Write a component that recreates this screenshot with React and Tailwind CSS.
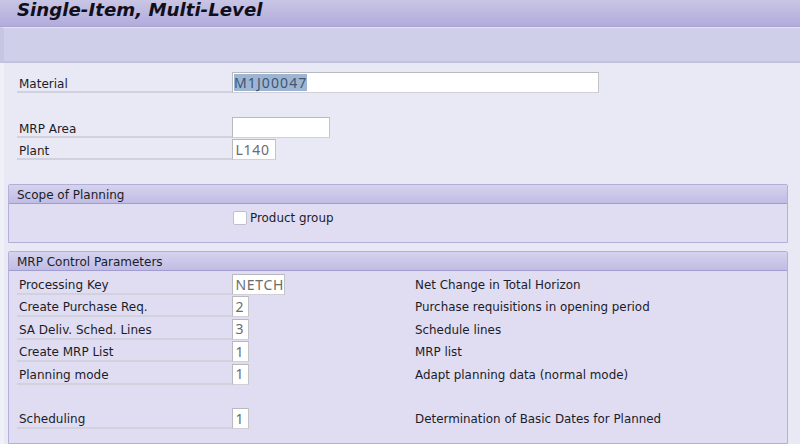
function Field({ w, value, selected }) {
  return (
    <div className={`h-[21px] ${w} shrink-0 border border-t-[#b9b9c0] border-l-[#b9b9c0] border-r-[#c4c4c8] border-b-[#d0d0d6] bg-white flex items-center ${selected ? "pl-[1px] tracking-[1.1px]" : "pl-[2.5px] tracking-[0.7px]"} text-[14px] text-[#6c6c6c] font-['Noto_Sans',sans-serif] leading-none`}>
      {selected ? <span className="bg-[#9db5d3] text-[#3f5570] h-[17px] flex items-center">{value}</span> : value}
    </div>
  );
}

function Row({ label, w, value, selected, desc, h = "h-[22px]", top = "pt-[3px]" }) {
  return (
    <div className={`flex items-start ${h}`}>
      <div className={`w-[215px] h-[21px] shrink-0 border-b-2 border-[#d2d2df] pl-[2px] ${top} text-[12px] leading-[16px] text-[#1c1c28]`}>{label}</div>
      <Field w={w} value={value} selected={selected} />
      {desc && <div className="ml-auto w-[372px] pt-[3px] text-[11.9px] leading-[16px] text-[#1c1c28] whitespace-nowrap">{desc}</div>}
    </div>
  );
}

function Section({ title, className, children }) {
  return (
    <section className={`ml-[4px] w-[780px] border border-[#b3afd9] rounded-t-[2px] bg-[#e0ddf3] ${className}`}>
      <div className="h-[19px] border-b border-[#a19cd0] bg-gradient-to-b from-[#d6d3ee] to-[#c0bce4] pl-[8px] pt-[1px] text-[12px] leading-[18px] text-[#1c1c28]">{title}</div>
      {children}
    </section>
  );
}

export default function App() {
  return (
    <div className="w-[800px] h-[444px] overflow-hidden bg-[#e9e9f5] font-['DejaVu_Sans',sans-serif]">
      <header className="h-[27px] bg-gradient-to-b from-[#c9c5e4] to-[#b2acdc] border-b border-[#aaa5d0] pl-[17px] text-[18.2px] leading-[19px] font-bold italic text-[#10101c] whitespace-nowrap">
        Single-Item, Multi-Level
      </header>
      <div className="h-[36px] bg-[#cfcfe9] border-l-[4px] border-l-[#c6c5e2] border-t border-t-[#e4e3f3] border-b-2 border-b-[#c3c2dc]" />
      <main className="h-[381px] pt-[9px] border-l-[4px] border-l-[#f0f0f8]">
        <div className="pl-[13px]">
          <div className="h-[45px]">
            <Row top="pt-[4px]" label="Material" w="w-[367px]" value="M1J00047" selected />
          </div>
          <Row top="pt-[4px]" label="MRP Area" w="w-[98px]" value="" />
          <Row top="pt-[4px]" label="Plant" w="w-[44px]" value="L140" />
        </div>
        <Section title="Scope of Planning" className="mt-[23px] h-[59px]">
          <div className="flex items-center pl-[224px] pt-[6px]">
            <div className="w-[14px] h-[14px] rounded-[2px] border border-[#c0c0c8] bg-white" />
            <span className="ml-[3px] text-[11.9px] leading-[16px] text-[#1c1c28]">Product group</span>
          </div>
        </Section>
        <Section title="MRP Control Parameters" className="mt-[8px] h-[193px]">
          <div className="pl-[8px] pr-0 pt-[3px]">
            <Row h="h-[22.4px]" label="Processing Key" w="w-[53px]" value="NETCH" desc="Net Change in Total Horizon" />
            <Row h="h-[22.4px]" label="Create Purchase Req." w="w-[17px]" value="2" desc="Purchase requisitions in opening period" />
            <Row h="h-[22.4px]" label="SA Deliv. Sched. Lines" w="w-[17px]" value="3" desc="Schedule lines" />
            <Row h="h-[22.4px]" label="Create MRP List" w="w-[17px]" value="1" desc="MRP list" />
            <Row h="h-[44.8px]" label="Planning mode" w="w-[17px]" value="1" desc="Adapt planning data (normal mode)" />
            <Row label="Scheduling" w="w-[17px]" value="1" desc="Determination of Basic Dates for Planned" />
          </div>
        </Section>
      </main>
    </div>
  );
}
